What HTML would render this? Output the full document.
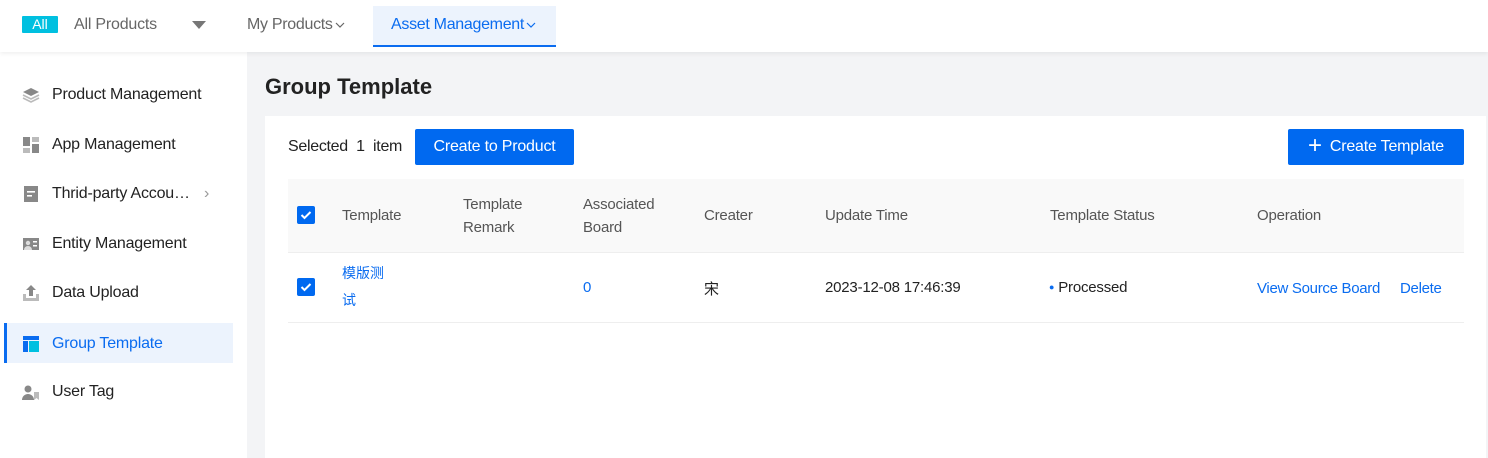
<!DOCTYPE html>
<html><head><meta charset="utf-8"><style>
*{margin:0;padding:0;box-sizing:border-box}
body{width:1488px;height:458px;overflow:hidden;background:#f3f4f6;font-family:"Liberation Sans","Noto Sans CJK SC",sans-serif;font-size:15px;color:#222;position:relative}
.top{position:absolute;left:0;top:0;width:1488px;height:52px;background:#fff;box-shadow:0 2px 4px rgba(0,0,0,.06);z-index:2}
.abs{position:absolute;white-space:nowrap}
.side{position:absolute;left:0;top:52px;width:247px;height:406px;background:#fff}
.item{position:absolute;left:0;width:233px;height:40px;display:flex;align-items:center;padding-left:22px;font-size:16px;color:#222;letter-spacing:-0.2px;padding-top:2px}
.item svg{margin-right:12px}
.card{position:absolute;left:265px;top:116px;width:1221px;height:342px;background:#fff}
.btn{position:absolute;background:#0069f0;color:#fff;border-radius:2px;font-size:16px;display:flex;align-items:center;justify-content:center;letter-spacing:-0.2px}
.th{position:absolute;color:#555;font-size:15px;line-height:23px;letter-spacing:-0.2px}
.cb{position:absolute;width:18px;height:18px;background:#0069f0;border-radius:2px}
.link{color:#0a6cf0}
</style></head><body>
<div class="top">
  <div class="abs" style="left:22px;top:16px;width:36px;height:17px;background:#00c0e0;color:#fff;font-size:14px;text-align:center;line-height:17px;border-radius:1px">All</div>
  <div class="abs" style="left:74px;top:16px;font-size:16px;color:#666;letter-spacing:-0.2px">All Products</div>
  <div class="abs" style="left:192px;top:21px;width:0;height:0;border-left:7px solid transparent;border-right:7px solid transparent;border-top:8px solid #777"></div>
  <div class="abs" style="left:247px;top:16px;font-size:16px;color:#666;letter-spacing:-0.3px">My Products<svg width="10" height="8" viewBox="0 0 10 8" style="margin-left:2px"><path d="M1 2l4 4 4-4" stroke="#666" stroke-width="1.2" fill="none"/></svg></div>
  <div class="abs" style="left:373px;top:6px;width:183px;height:41px;background:#ecf3fd;border-bottom:2px solid #0a6cf0"></div>
  <div class="abs" style="left:391px;top:16px;font-size:16px;color:#0a6cf0;letter-spacing:-0.3px">Asset Management<svg width="10" height="8" viewBox="0 0 10 8" style="margin-left:2px"><path d="M1 2l4 4 4-4" stroke="#0a6cf0" stroke-width="1.2" fill="none"/></svg></div>
</div>
<div class="side">
  <div class="item" style="top:22px"><svg width="18" height="18" viewBox="0 0 18 18"><path d="M9 2l8 4-8 4-8-4z" fill="#888"/><path d="M1 9l8 4 8-4M1 12l8 4 8-4" stroke="#bbb" stroke-width="1.6" fill="none"/></svg>Product Management</div>
  <div class="item" style="top:72px"><svg width="18" height="18" viewBox="0 0 18 18"><rect x="1" y="1" width="7" height="9" fill="#888"/><rect x="1" y="12" width="7" height="5" fill="#bbb"/><rect x="10" y="1" width="7" height="5" fill="#bbb"/><rect x="10" y="8" width="7" height="9" fill="#888"/></svg>App Management</div>
  <div class="item" style="top:121px"><svg width="18" height="18" viewBox="0 0 18 18"><rect x="2" y="1" width="14" height="16" fill="#888"/><rect x="5" y="6" width="8" height="1.6" fill="#fff"/><rect x="5" y="10" width="5" height="1.6" fill="#fff"/></svg>Thrid-party Accou…<span style="position:absolute;left:204px;color:#999">›</span></div>
  <div class="item" style="top:171px"><svg width="18" height="18" viewBox="0 0 18 18"><rect x="1" y="3" width="16" height="12" fill="#888"/><circle cx="6" cy="8" r="2.2" fill="#ddd"/><path d="M2 15a4 4 0 0 1 8 0z" fill="#ddd"/><rect x="11" y="6" width="4" height="1.5" fill="#fff"/><rect x="11" y="10" width="4" height="1.5" fill="#fff"/></svg>Entity Management</div>
  <div class="item" style="top:220px"><svg width="18" height="18" viewBox="0 0 18 18"><path d="M9 1l5 5h-3v6H7V6H4z" fill="#888"/><path d="M1 10h3v4h10v-4h3v7H1z" fill="#bbb"/></svg>Data Upload</div>
  <div class="item" style="top:271px;left:4px;background:#ecf3fd;border-left:3px solid #0a6cf0;padding-left:15px;width:229px;color:#0a6cf0"><svg width="18" height="18" viewBox="0 0 18 18"><rect x="1" y="1" width="16" height="4" fill="#0a6cf0"/><rect x="1" y="6" width="5" height="11" fill="#0a6cf0"/><rect x="7" y="6" width="10" height="11" fill="#00c0e0"/></svg>Group Template</div>
  <div class="item" style="top:319px"><svg width="18" height="18" viewBox="0 0 18 18"><circle cx="6" cy="6" r="3.5" fill="#888"/><path d="M0 17a6 6 0 0 1 12 0z" fill="#888"/><path d="M12 9h5v8l-2.5-2-2.5 2z" fill="#bbb"/></svg>User Tag</div>
</div>
<div class="abs" style="left:265px;top:74px;font-size:22px;font-weight:bold;color:#222">Group Template</div>
<div class="card"></div>
<div class="abs" style="left:288px;top:138px;font-size:16px;letter-spacing:-0.3px">Selected&nbsp; 1&nbsp; item</div>
<div class="btn" style="left:415px;top:129px;width:159px;height:36px">Create to Product</div>
<div class="btn" style="left:1288px;top:129px;width:176px;height:36px"><span style="font-size:24px;font-weight:300;margin-right:8px;margin-top:-3px">+</span>Create Template</div>
<div class="abs" style="left:288px;top:179px;width:1176px;height:74px;background:#f9f9f9;border-bottom:1px solid #eee"></div>
<div class="abs" style="left:288px;top:322px;width:1176px;height:1px;background:#eee"></div>
<div class="cb" style="left:297px;top:206px"><svg width="18" height="18" viewBox="0 0 18 18"><path d="M4.5 9l3 3 6-6" stroke="#fff" stroke-width="2" fill="none"/></svg></div>
<div class="cb" style="left:297px;top:278px"><svg width="18" height="18" viewBox="0 0 18 18"><path d="M4.5 9l3 3 6-6" stroke="#fff" stroke-width="2" fill="none"/></svg></div>
<div class="th" style="left:342px;top:204px">Template</div>
<div class="th" style="left:463px;top:193px">Template<br>Remark</div>
<div class="th" style="left:583px;top:193px">Associated<br>Board</div>
<div class="th" style="left:704px;top:204px">Creater</div>
<div class="th" style="left:825px;top:204px">Update Time</div>
<div class="th" style="left:1050px;top:204px">Template Status</div>
<div class="th" style="left:1257px;top:204px">Operation</div>
<div class="abs link" style="left:342px;top:260px;font-size:14px;line-height:27px">模版测<br>试</div>
<div class="abs link" style="left:583px;top:279px;font-size:15px">0</div>
<div class="abs" style="left:704px;top:278px;font-size:15px">宋</div>
<div class="abs" style="left:825px;top:279px;font-size:15px;letter-spacing:-0.2px">2023-12-08 17:46:39</div>
<div class="abs" style="left:1049px;top:279px;font-size:15px;letter-spacing:-0.2px"><span style="color:#0a6cf0;font-size:9px;vertical-align:2px">●</span> Processed</div>
<div class="abs link" style="left:1257px;top:280px;font-size:15px;letter-spacing:-0.3px">View Source Board</div>
<div class="abs link" style="left:1400px;top:280px;font-size:15px;letter-spacing:-0.3px">Delete</div>
</body></html>
